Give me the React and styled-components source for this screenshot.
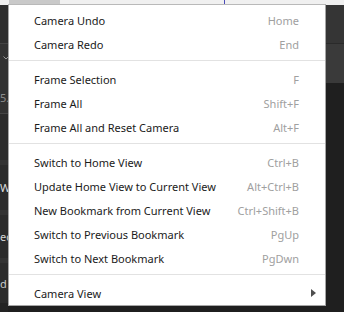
import styled, { createGlobalStyle } from "styled-components";

const GlobalStyle = createGlobalStyle`
  html, body {
    margin: 0;
    padding: 0;
    background: #1f1f1f;
  }
  body {
    font-family: "Noto Sans", "Liberation Sans", sans-serif;
  }
`;

const Page = styled.div`
  position: relative;
  width: 344px;
  height: 312px;
  overflow: hidden;
  display: flex;
  flex-direction: column;
`;

const TabStrip = styled.div`
  height: 5px;
  flex: none;
  background: #f0f0f0;
  display: flex;
  align-items: flex-start;
`;

const Tab = styled.div`
  margin-left: 9px;
  width: 51px;
  height: 4px;
  background: #c9c9c9;
`;

const Tick = styled.div`
  margin-left: 164px;
  width: 1px;
  height: 4px;
  background: #4a4ab8;
`;

const Workspace = styled.div`
  flex: 1;
  display: grid;
  grid-template-columns: 8px 1fr;
`;

const SidePanel = styled.div`
  display: flex;
  flex-direction: column;
  background: #2b2b2b;
  overflow: hidden;
`;

const Band = styled.div`
  flex: none;
  height: ${({ h }) => h}px;
  background: ${({ bg }) => bg};
  border-bottom: ${({ line }) => (line ? `1px solid ${line}` : "none")};
  display: flex;
  flex-direction: column;
  justify-content: center;
  gap: 30px;
  padding-top: ${({ top }) => top || 0}px;
  box-sizing: border-box;
  font-size: 11px;
  color: ${({ fg }) => fg || "#8a8a8a"};
  white-space: nowrap;
  overflow: hidden;
`;

const Chevron = styled.svg`
  width: 6px;
  height: 4px;
  margin-left: 3px;
`;

const MainArea = styled.div`
  display: flex;
  flex-direction: column;
`;

const Viewport = styled.div`
  flex: 1;
  background: #1f1f1f;
`;

const Menu = styled.div`
  position: absolute;
  left: 8px;
  top: 4px;
  width: 316px;
  background: #ffffff;
  border: 1px solid #a6a6a6;
  border-top-color: #b9b9b9;
  padding-top: 3px;
  box-sizing: content-box;
  font-size: 11px;
`;

const Item = styled.div`
  height: 24px;
  display: grid;
  grid-template-columns: 1fr auto;
  align-items: center;
  padding: 0 ${({ sub }) => (sub ? 9 : 26)}px 0 25px;
`;

const Label = styled.span`
  color: #1b1b1b;
`;

const Shortcut = styled.span`
  color: #a0a0a0;
`;

const Arrow = styled.span`
  width: 0;
  height: 0;
  border-left: 5px solid #4f4f4f;
  border-top: 4.5px solid transparent;
  border-bottom: 4.5px solid transparent;
`;

const Separator = styled.div`
  height: 1px;
  margin: 4px 0 6px;
  background: #e2e2e2;
`;

const groups = [
  [
    ["Camera Undo", "Home"],
    ["Camera Redo", "End"],
  ],
  [
    ["Frame Selection", "F"],
    ["Frame All", "Shift+F"],
    ["Frame All and Reset Camera", "Alt+F"],
  ],
  [
    ["Switch to Home View", "Ctrl+B"],
    ["Update Home View to Current View", "Alt+Ctrl+B"],
    ["New Bookmark from Current View", "Ctrl+Shift+B"],
    ["Switch to Previous Bookmark", "PgUp"],
    ["Switch to Next Bookmark", "PgDwn"],
  ],
];

const App = () => {
  return (
    <Page>
      <GlobalStyle />
      <TabStrip>
        <Tab />
        <Tick />
      </TabStrip>
      <Workspace>
        <SidePanel>
          <Band h={39} bg="#2e2e2e" line="#434343" />
          <Band h={70} bg="#323232" line="#454545" fg="#8c8c8c" top={4}>
            <Chevron viewBox="0 0 6 4">
              <path d="M0.5 0.5 L3 3 L5.5 0.5" stroke="#9a9a9a" fill="none" />
            </Chevron>
            <span>5..</span>
          </Band>
          <Band h={46} bg="#2b2b2b" />
          <Band h={5} bg="#333333" />
          <Band h={45} bg="#2b2b2b" fg="#dcdcdc">Wo</Band>
          <Band h={5} bg="#333333" />
          <Band h={43} bg="#2b2b2b" fg="#d4d4d4">ed</Band>
          <Band h={5} bg="#333333" />
          <Band h={40} bg="#2b2b2b" fg="#cacaca">d S</Band>
          <Band h={12} bg="#232323" />
        </SidePanel>
        <MainArea>
          <Band h={39} bg="#353535" line="#2a2a2a" />
          <Band h={39} bg="#3a3a3a" />
          <Viewport />
        </MainArea>
      </Workspace>
      <Menu>
        {groups.map((group, gi) => (
          <div key={gi}>
            {group.map(([label, key]) => (
              <Item key={label}>
                <Label>{label}</Label>
                <Shortcut>{key}</Shortcut>
              </Item>
            ))}
            <Separator />
          </div>
        ))}
        <Item sub>
          <Label>Camera View</Label>
          <Arrow />
        </Item>
      </Menu>
    </Page>
  );
};

export default App;
